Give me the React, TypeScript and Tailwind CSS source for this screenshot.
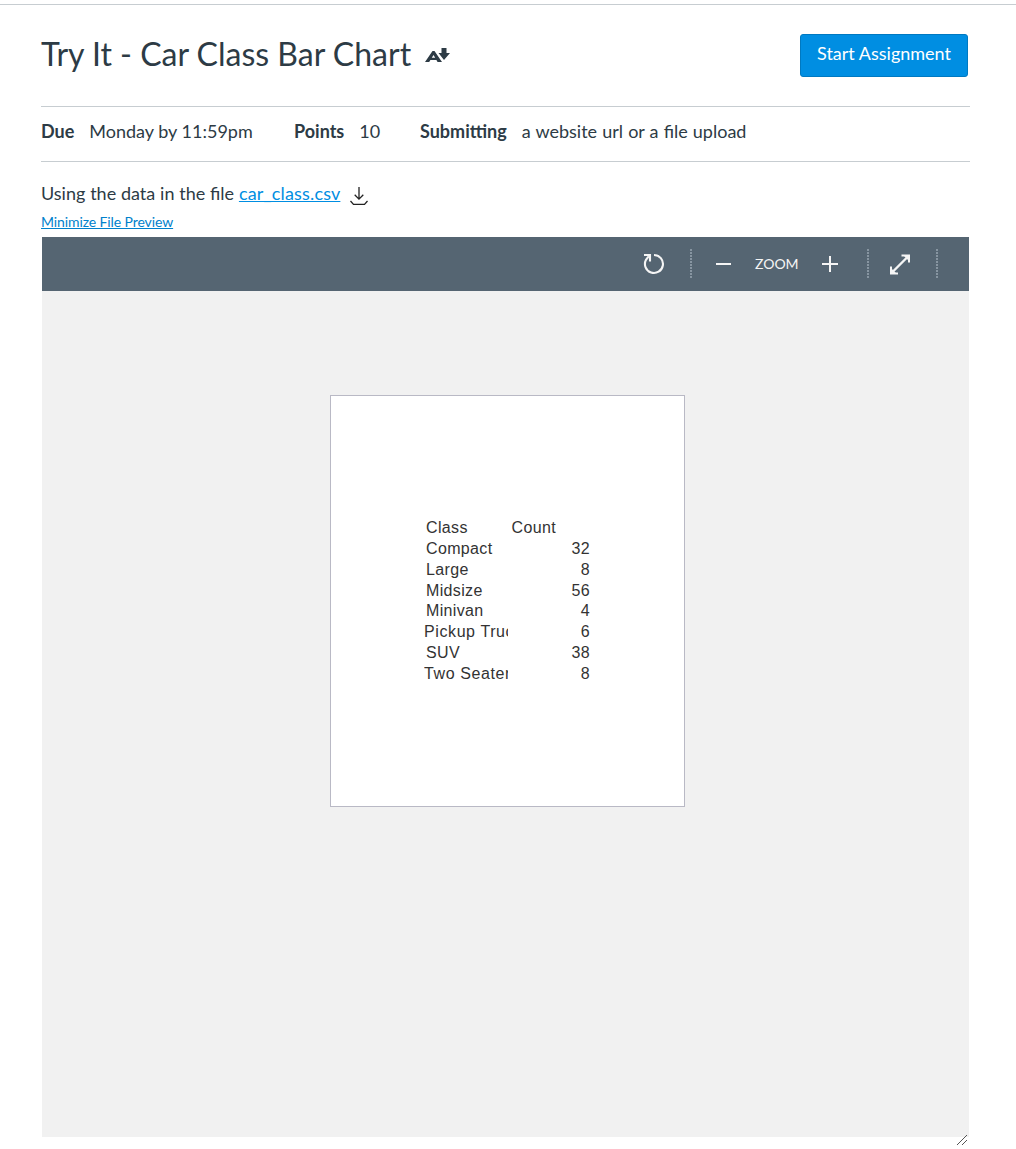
import React from "react";

const details = [
  { label: "Due", value: "Monday by 11:59pm", className: "w-[253px]" },
  { label: "Points", value: "10", className: "w-[126px]" },
  {
    label: "Submitting",
    value: "a website url or a file upload",
    className: "[word-spacing:0.5px]",
  },
];

const rows = [
  { name: "Compact", count: 32 },
  { name: "Large", count: 8 },
  { name: "Midsize", count: 56 },
  { name: "Minivan", count: 4 },
  { name: "Pickup Truck", count: 6 },
  { name: "SUV", count: 38 },
  { name: "Two Seater", count: 8 },
];

const AltFormatsIcon = () => (
  <svg width="25" height="14" viewBox="0 0 25 14" className="ml-[14px] mt-[4px]">
    <path
      fill="#2D3B45"
      fillRule="evenodd"
      d="M0 14 L7.5 3 H9.5 L17 14 H12.6 L11.4 12 H5.4 L4.2 14 Z M6.8 9.8 H10.2 L8.5 7 Z"
    />
    <path fill="#2D3B45" d="M16.5 0 H21.5 V5 H25 L19 12 L13.5 5 H16.5 Z" />
  </svg>
);

const DownloadIcon = () => (
  <svg
    width="18"
    height="19"
    viewBox="0 0 18 19"
    fill="none"
    stroke="#222"
    strokeWidth="1.3"
    className="ml-[10px] mt-[7px]"
  >
    <path d="M9 0 V12 M4.7 7.8 L9 12.1 L13.3 7.8" />
    <path d="M0.5 14 L3.5 17.4 H14.5 L17.5 14" />
  </svg>
);

const RotateIcon = () => (
  <svg width="22" height="22" viewBox="0 0 22 22" fill="none" stroke="#f5f5f5" strokeWidth="2.1">
    <path d="M11 2 A9 9 0 1 1 3 6.8 L5.4 3.6" />
    <path d="M1 2 H7 V8.5" />
    <path d="M3.5 2 H7 V5.5 Z" fill="#f5f5f5" stroke="none" />
  </svg>
);

const ExpandIcon = () => (
  <svg width="20" height="21" viewBox="0 0 20 21" fill="none" stroke="#f5f5f5" strokeWidth="2">
    <path d="M2 18.5 L18 2.5" strokeWidth="2.4" />
    <path d="M11.5 1.5 H19 V8.5 M1 12.5 V19.5 H8" />
    <path d="M14 2 H18.5 V6.5 Z M1.5 14.5 V19 H6 Z" fill="#f5f5f5" stroke="none" />
  </svg>
);

const Separator = () => (
  <div className="h-[30px] w-[2px] bg-[repeating-linear-gradient(to_bottom,#8795a1_0_2px,transparent_2px_3px)]" />
);

const Header = () => (
  <header className="flex h-[102px] items-start justify-between border-b border-[#C7CDD1] pt-[29px]">
    <div className="flex items-start">
      <h1 className="h-10 whitespace-nowrap text-[32px] leading-[39px]">
        Try It - Car Class Bar Chart
      </h1>
      <div className="pt-[10px]">
        <AltFormatsIcon />
      </div>
    </div>
    <button className="mr-[2px] h-[43px] w-[168px] rounded-[3px] border border-[#0079C1] bg-[#008EE2] pb-[5px] text-[18px] text-white">
      Start Assignment
    </button>
  </header>
);

const Toolbar = () => (
  <div className="flex h-[54px] items-center bg-[#556572] text-[#f5f5f5]">
    <div className="ml-[601px] w-[47px]">
      <RotateIcon />
    </div>
    <Separator />
    <div className="ml-[24px] flex w-[151px] items-center">
      <div className="h-[2px] w-[15px] bg-[#f5f5f5]" />
      <span className="ml-[24px] w-[67px] text-[14px] leading-5">ZOOM</span>
      <svg width="16" height="16" viewBox="0 0 16 16" stroke="#f5f5f5" strokeWidth="2">
        <path d="M0 8 H16 M8 0 V16" />
      </svg>
    </div>
    <Separator />
    <div className="ml-[21px] w-[46px]">
      <ExpandIcon />
    </div>
    <Separator />
  </div>
);

const CsvPage = () => (
  <div className="h-[412px] w-[355px] border border-[#B9B9C5] bg-white pl-[93px] pt-[121px] font-['Liberation_Sans',Arial,sans-serif] text-[16px] tracking-[0.35px] text-[#333]">
    <div className="flex h-[21px] items-center">
      <span className="w-[87.5px] pl-[2px]">Class</span>
      <span>Count</span>
    </div>
    {rows.map(({ name, count }) => (
      <div key={name} className="flex h-[20.85px] w-[166px] items-center justify-between pt-px">
        <span
          className={`w-[84px] overflow-hidden whitespace-nowrap ${
            name.includes(" ") ? "tracking-[0.6px]" : "pl-[2px]"
          }`}
        >
          {name}
        </span>
        <span>{count}</span>
      </div>
    ))}
  </div>
);

const App = () => {
  return (
    <div className="h-[1149px] w-[1016px] overflow-hidden bg-white pt-1 font-['Lato',sans-serif] text-[18px] text-[#2D3B45]">
      <div className="h-px bg-[#C7CDD1]" />
      <main className="ml-[41px] w-[929px]">
        <Header />
        <ul className="flex h-[55px] items-start border-b border-[#C7CDD1] pt-[11px]">
          {details.map(({ label, value, className }) => (
            <li key={label} className={`flex whitespace-nowrap leading-[27px] ${className}`}>
              <span className="mr-[15px] font-bold">{label}</span>
              <span>{value}</span>
            </li>
          ))}
        </ul>
        <div className="flex h-[48px] items-start pt-[18px] leading-[27px]">
          <span className="whitespace-pre [word-spacing:0.2px]">Using the data in the file </span>
          <a href="#" className="tracking-[0.15px] text-[#008EE2] underline">
            car_class.csv
          </a>
          <DownloadIcon />
        </div>
        <a
          href="#"
          className="block h-[27px] text-[14px] leading-[23px] tracking-[-0.1px] text-[#0081CC] underline"
        >
          Minimize File Preview
        </a>
        <section className="ml-px w-[927px]">
          <Toolbar />
          <div className="flex h-[846px] justify-center bg-[#F1F1F1] pl-[4px] pt-[104px]">
            <CsvPage />
          </div>
        </section>
        <svg
          width="12"
          height="12"
          viewBox="0 0 12 12"
          fill="none"
          stroke="#555"
          className="ml-auto mr-[2px] -mt-[3px]"
        >
          <path d="M1 11 L11 1 M6 11 L11 6" />
        </svg>
      </main>
    </div>
  );
};

export default App;
